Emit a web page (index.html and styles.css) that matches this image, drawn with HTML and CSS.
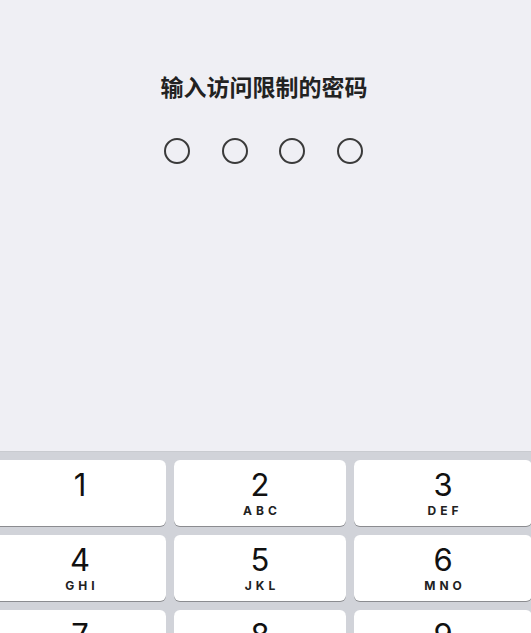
FILE: index.html
```html
<!DOCTYPE html>
<html lang="zh">
<head>
<meta charset="utf-8">
<link rel="stylesheet" href="styles.css">
</head>
<body>
<div class="screen">
  <main class="prompt">
    <h1 class="title">输入访问限制的密码</h1>
    <div class="dots">
      <span class="dot"></span><span class="dot"></span><span class="dot"></span><span class="dot"></span>
    </div>
  </main>
  <section class="keypad">
    <div class="key"><span class="num">1</span><span class="letters"></span></div>
    <div class="key"><span class="num">2</span><span class="letters">ABC</span></div>
    <div class="key"><span class="num">3</span><span class="letters">DEF</span></div>
    <div class="key"><span class="num">4</span><span class="letters">GHI</span></div>
    <div class="key"><span class="num">5</span><span class="letters">JKL</span></div>
    <div class="key"><span class="num">6</span><span class="letters">MNO</span></div>
    <div class="key"><span class="num">7</span><span class="letters">PQRS</span></div>
    <div class="key"><span class="num">8</span><span class="letters">TUV</span></div>
    <div class="key"><span class="num">9</span><span class="letters">WXYZ</span></div>
  </section>
</div>
</body>
</html>
```
FILE: styles.css
```css
* { box-sizing: border-box; }
html, body {
  margin: 0;
  padding: 0;
  width: 531px;
  height: 633px;
  overflow: hidden;
  background: #efeff4;
  font-family: Inter, "Noto Sans CJK SC", sans-serif;
}
.screen {
  width: 531px;
  height: 633px;
  display: flex;
  flex-direction: column;
  overflow: hidden;
}
.prompt {
  height: 451px;
  flex-shrink: 0;
  display: flex;
  flex-direction: column;
  align-items: center;
  padding-top: 71px;
}
.title {
  margin: 0;
  font-family: "Noto Sans CJK SC", sans-serif;
  font-size: 23px;
  font-weight: 700;
  line-height: 30px;
  color: #222;
  padding-right: 3px;
}
.dots {
  display: flex;
  gap: 31.5px;
  margin-top: 37px;
  padding-right: 4px;
}
.dot {
  width: 26px;
  height: 26px;
  border: 2px solid #3a3a3a;
  border-radius: 50%;
}
.keypad {
  flex: 1 0 auto;
  background: #d1d3d9;
  border-top: 1px solid #c9cbd0;
  display: grid;
  grid-template-columns: 172px 172px 178px;
  grid-auto-rows: 66px;
  column-gap: 8px;
  row-gap: 9px;
  padding-top: 8px;
  margin-left: -6px;
  width: 546px;
}
.key {
  background: #ffffff;
  border-radius: 6px;
  box-shadow: 0 1px 0 #8b8c90;
  display: flex;
  flex-direction: column;
  align-items: center;
  padding-top: 6px;
}
.num {
  font-family: Inter, sans-serif;
  font-size: 31px;
  font-weight: 400;
  line-height: 38px;
  color: #111;
}
.letters {
  font-family: Inter, sans-serif;
  font-size: 12px;
  font-weight: 700;
  letter-spacing: 4px;
  padding-left: 4px;
  line-height: 14px;
  color: #222;
}
```
